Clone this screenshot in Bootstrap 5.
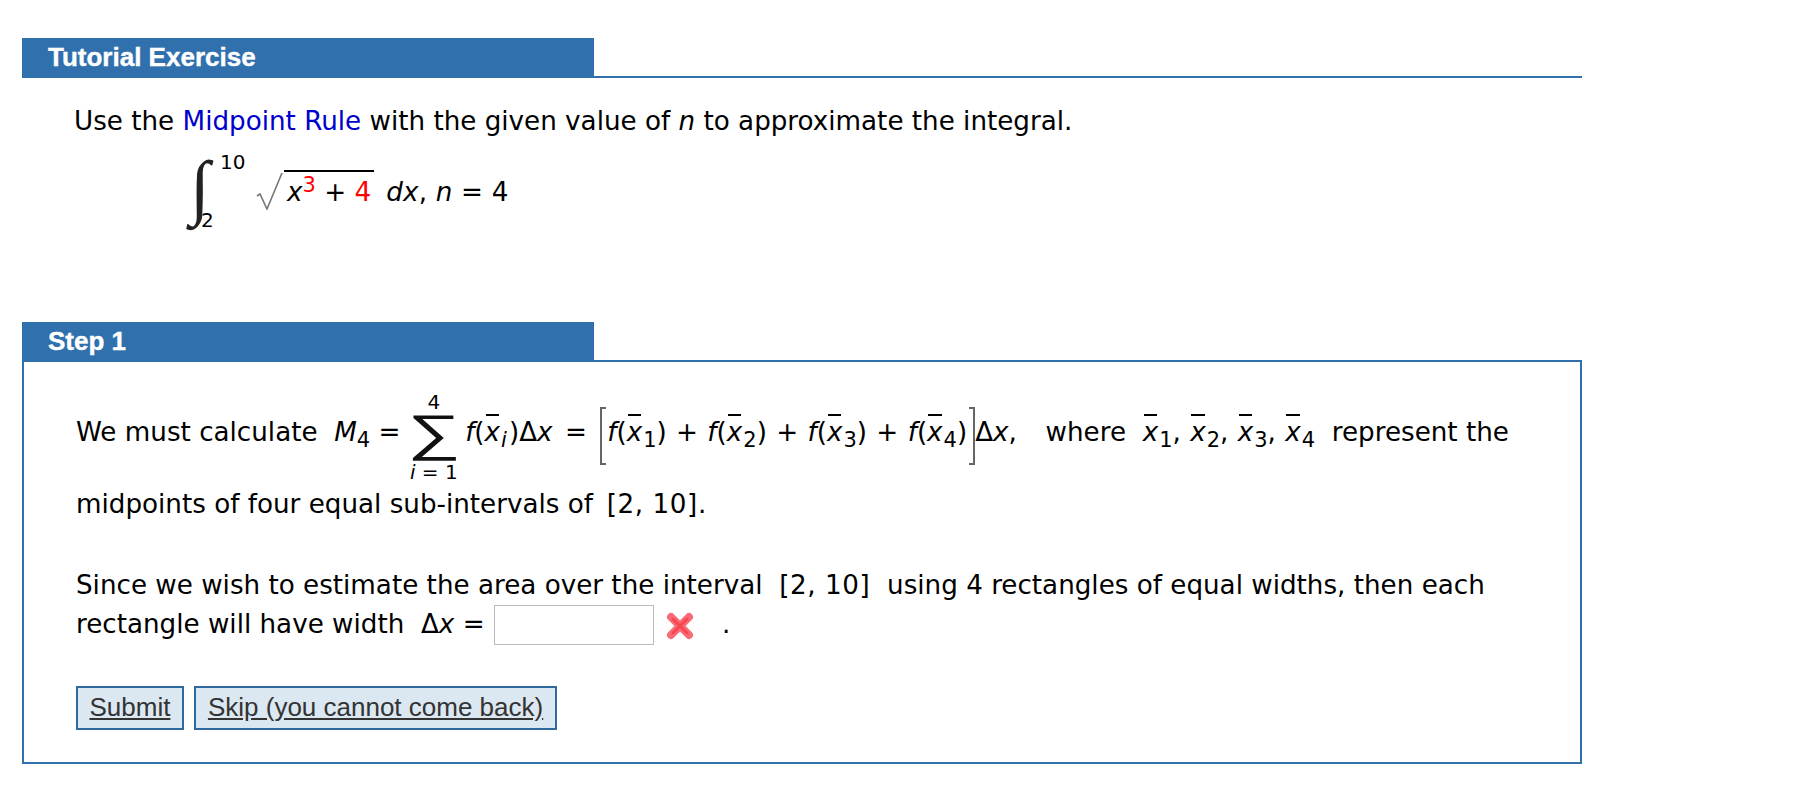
<!DOCTYPE html>
<html lang="en"><head><meta charset="utf-8"><title>Tutorial Exercise</title>
<link rel="stylesheet" href="https://cdn.jsdelivr.net/npm/bootstrap@5.3.0/dist/css/bootstrap.min.css">
<style>
:root{--ink:#3070ad}
body{background:#fff;color:#000;font-family:"DejaVu Sans",Verdana,sans-serif;font-size:26.2px;line-height:39px;padding:38px 0 0 22px;width:1582px}
.hdrow{border-bottom:2px solid var(--ink);height:40px}
.hdtab{width:572px;height:40px;background:var(--ink);color:#fff;font:700 26px/38px "Liberation Sans",Arial,sans-serif;padding:0 0 0 26px;-webkit-text-stroke:.4px #fff}
.hdstep{margin-top:91px}
.intro{padding:24px 0 0 52px}
.blue{color:#00c}
.red{color:#f00}
i{font-style:italic}
.intline{height:81px;padding-left:168px;margin-top:9px}
.intsym{font-family:"Liberation Serif",serif;font-size:72px;line-height:74px;width:11px;margin-bottom:7px;color:#222}
.lims{width:55px;font-size:20px;line-height:24px;height:86px;padding:2px 0}
.lims span:first-child{margin-left:19px}
.radical{width:28px;height:38px}
.under{border-top:2px solid #000;line-height:40.6px;padding:0 3px;margin-top:2px}
.under sup{font-size:21px;line-height:0;top:-.42em}
.dxpart{margin:4px 0 0 12px;letter-spacing:.2px}
.stepbox{border:2px solid var(--ink);border-top:0;height:402px;padding:22px 0 0 52px}
.stepbox sub{font-size:21px;line-height:0;bottom:-.3em}
.mrow{white-space:nowrap;line-height:39px}
.toprow{margin-bottom:2.5px}
.sumcol{display:inline-flex;flex-direction:column;align-items:center;vertical-align:middle;width:50px;font-size:20px;line-height:20px;margin:8px -2px 0 0}
.sumsym{font-family:"Liberation Sans",sans-serif;font-size:50px;line-height:50px;height:50px;color:#111;transform:scaleX(1.5) translateY(-4px)}
.bl,.br{display:inline-block;width:6px;height:58px;border:2px solid #666;vertical-align:middle;margin-top:6px}
.bl{border-right:0;margin:6px 1px 0 5px}.br{border-left:0;margin-left:2px}
.xb{position:relative;display:inline-block;line-height:1;margin-right:1px}
.xb::before{content:"";position:absolute;left:1px;right:1px;top:-5px;height:2px;background:#000}
.fxi{margin-right:2px}
.opr{margin:0 0 0 4px}
.pls{margin:0 1px}
.cma{margin-right:12px}
.xlist{margin-right:1px}
.rng{letter-spacing:.6px}
.rngpull{margin-left:-3px}
.gaprow{margin-top:42px}
.ansbox{width:160px;height:40px;border:1px solid #bbb;vertical-align:middle;background:#fff;margin:0 12px 0 1px}
.xicon{width:28px;height:28px;vertical-align:middle;margin:2px 28px 0 0}
.btnrow{margin-top:41px;gap:10.5px}
.subbtn{height:44px;border:2px solid #2f6a9e;border-radius:0;background:#dbe7f1;color:#333;font:26px/38px "Liberation Sans",Arial,sans-serif;padding:0 11.5px;text-decoration:underline}
.subbtn:hover{background:#dbe7f1;color:#333}
</style></head><body>
<div class="hdrow"><div class="hdtab">Tutorial Exercise</div></div>
<div class="intro">Use the <span class="blue">Midpoint Rule</span> with the given value of <i>n</i> to approximate the integral.</div>
<div class="intline d-flex align-items-center">
<span class="intsym">∫</span>
<span class="lims d-flex flex-column justify-content-between"><span>10</span><span>2</span></span>
<svg class="radical" viewBox="0 0 28 38"><path d="M1 24 L4 22 L11 37 L26 1" fill="none" stroke="#777" stroke-width="1.6"/></svg>
<span class="under"><i>x</i><sup class="red">3</sup> + <span class="red">4</span></span>
<span class="dxpart"><i>dx</i>, <i>n</i> = 4</span>
</div>
<div class="hdrow hdstep"><div class="hdtab">Step 1</div></div>
<div class="stepbox">
<div class="mrow toprow">We must calculate&nbsp; <i>M</i><sub>4</sub> = <span class="sumcol"><span>4</span><span class="sumsym">∑</span><span><i>i</i> = 1</span></span> <i>f</i>(<i class="xb">x</i><sub class="fxi"><i>i</i></sub>)Δ<i>x</i> <span class="opr">=</span> <span class="bl"></span><i>f</i>(<i class="xb">x</i><sub>1</sub>) <span class="pls">+</span> <i>f</i>(<i class="xb">x</i><sub>2</sub>) <span class="pls">+</span> <i>f</i>(<i class="xb">x</i><sub>3</sub>) <span class="pls">+</span> <i>f</i>(<i class="xb">x</i><sub>4</sub>)<span class="br"></span>Δ<i>x</i><span class="cma">,</span>&nbsp; where&nbsp; <i class="xb">x</i><sub>1</sub><span class="xlist">,</span> <i class="xb">x</i><sub>2</sub><span class="xlist">,</span> <i class="xb">x</i><sub>3</sub><span class="xlist">,</span> <i class="xb">x</i><sub>4</sub>&nbsp; represent the</div>
<div class="mrow">midpoints of four equal sub-intervals of&nbsp; <span class="rng rngpull">[2, 10]</span>.</div>
<div class="mrow gaprow">Since we wish to estimate the area over the interval&nbsp; <span class="rng">[2, 10]</span>&nbsp; using 4 rectangles of equal widths, then each</div>
<div class="mrow">rectangle will have width&nbsp; Δ<i>x</i> = <input class="ansbox" type="text" aria-label="answer"><svg class="xicon" viewBox="0 0 28 28"><path d="M5 5 L23 23 M23 5 L5 23" stroke="#fa6a76" stroke-width="8" stroke-linecap="round"/><path d="M7 7 L21 21 M21 7 L7 21" stroke="#f4464f" stroke-width="3" stroke-linecap="round"/></svg>.</div>
<div class="d-flex btnrow"><a href="#" class="btn subbtn">Submit</a><a href="#" class="btn subbtn">Skip (you cannot come back)</a></div>
</div>
<script src="https://cdn.jsdelivr.net/npm/bootstrap@5.3.0/dist/js/bootstrap.bundle.min.js"></script>
</body></html>
